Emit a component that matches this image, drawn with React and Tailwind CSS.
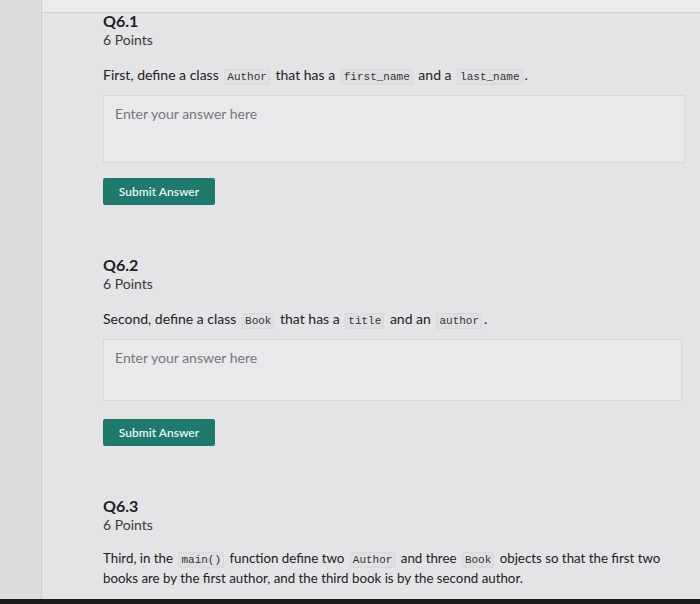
import React from 'react';

const Code = ({ children }) => (
  <code className="mx-[2px] rounded-[2px] border border-[#d8d8da] bg-[#e0e0e2] px-[2px] py-[1px] font-['Liberation_Mono',monospace] text-[11px] leading-[14px] text-[#333]">
    {children}
  </code>
);

const Question = ({ num, children, answer = true, textCls = 'mt-[16px] text-[14px]', boxH = 'h-[68px]', boxW = 'w-[582px]', btnGap = 'mt-[15px]' }) => (
  <section className="flex flex-col">
    <h2 className="text-[16px] font-bold leading-[16px] text-[#1f1f1f]">{num}</h2>
    <p className="mt-[2px] text-[14px] leading-[18px] text-[#3a3a3a]">6 Points</p>
    <div className={`${textCls} whitespace-nowrap leading-[20px] text-[#222]`}>{children}</div>
    {answer && (
      <>
        <div className={`mt-[10px] ${boxH} ${boxW} border border-[#d8d8da] bg-[#e9e9eb] px-[11px] py-[7px] text-[14px] text-[#77777a]`}>
          Enter your answer here
        </div>
        <button className={`${btnGap} h-[27px] w-[112px] rounded-[2px] bg-[#1d7a6d] text-[12px] font-semibold text-[#e8f3f1]`}>
          Submit Answer
        </button>
      </>
    )}
  </section>
);

export default function App() {
  return (
    <div className="flex h-[604px] w-[700px] flex-col overflow-hidden bg-[#e4e3e6] font-['Lato',sans-serif]">
      <div className="flex flex-1">
        {/* left gutter */}
        <div className="w-[42px] shrink-0 border-r border-[#cfcfd2] bg-[#dddde0]" />
        <div className="flex flex-1 flex-col">
          <div className="h-[13px] border-b border-[#cdcdd0] bg-[#ebebed]" />
          <main className="flex flex-col gap-[52px] pl-[61px]">
            <Question num="Q6.1">
              First, define a class <Code>Author</Code> that has a <Code>first_name</Code> and a <Code>last_name</Code>.
            </Question>
            <Question num="Q6.2" boxH="h-[62px]" boxW="w-[579px]" btnGap="mt-[18px]">
              Second, define a class <Code>Book</Code> that has a <Code>title</Code> and an <Code>author</Code>.
            </Question>
            <Question num="Q6.3" answer={false} textCls="mt-[14px] text-[13.3px]">
              Third, in the <Code>main()</Code> function define two <Code>Author</Code> and three <Code>Book</Code> objects so that the first two
              <br />
              books are by the first author, and the third book is by the second author.
            </Question>
          </main>
        </div>
      </div>
      <div className="h-[5px] bg-[#1b1b1d]" />
    </div>
  );
}
